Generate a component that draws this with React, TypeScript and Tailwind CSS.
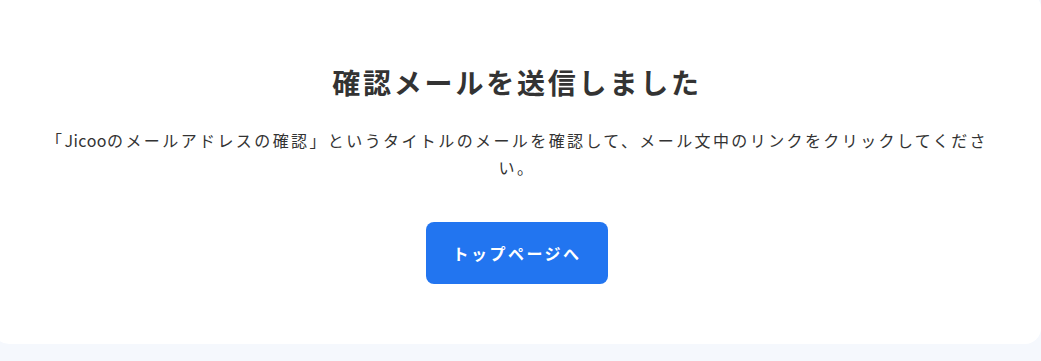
export default function App() {
  return (
    <div className="min-h-[361px] w-full overflow-hidden bg-[#f5f8fd]">
      <div
        className="-mt-2 -ml-[7px] w-[1048px] rounded-2xl bg-white px-[50px] pt-[69px] pb-[60px] text-[#333333]"
        style={{ fontFamily: '"Noto Sans CJK JP", "Noto Sans", sans-serif' }}
      >
        <h1 className="text-center text-[28px] font-bold leading-[42px] tracking-[0.1em]">
          確認メールを送信しました
        </h1>
        <p className="mt-6 text-center text-[16px] leading-[27px] tracking-[2.4px]">
          「<span className="tracking-[0.5px]">Jicoo</span>のメールアドレスの確認」というタイトルのメールを確認して、メール文中のリンクをクリックしてください。
        </p>
        <div className="mt-[41px] flex justify-center">
          <button className="flex h-[62px] w-[182px] items-center justify-center rounded-lg bg-[#2275f0] text-[16px] font-bold tracking-[2.5px] text-white">
            トップページへ
          </button>
        </div>
      </div>
    </div>
  );
}
